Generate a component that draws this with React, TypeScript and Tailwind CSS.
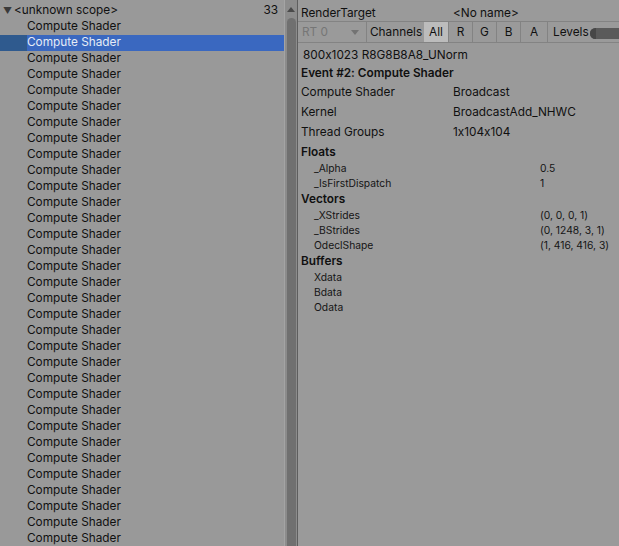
import { useState } from 'react';

const rows = Array.from({ length: 33 }, () => 'Compute Shader');

function ScopeList() {
    const [selected, setSelected] = useState(1);
    return (
        <div className="flex w-[284px] shrink-0 flex-col pt-[3px] bg-[#999999]">
            <div className="flex h-4 items-center text-[11.8px] text-[#101010]">
                <span className="ml-[3px] w-[11px] text-[9px] text-[#3a3a3a]">▼</span>
                <span>&lt;unknown scope&gt;</span>
                <span className="ml-auto mr-[6px]">33</span>
            </div>
            {rows.map((label, i) => {
                const active = i === selected;
                return (
                    <div
                        key={i}
                        onClick={() => setSelected(i)}
                        className={
                            active
                                ? 'flex h-4 items-center bg-[#3a68c0] text-[11.8px] text-[#e6ecf6]'
                                : 'flex h-4 items-center text-[11.8px] text-[#101010]'
                        }
                    >
                        <span className={active ? 'h-full w-[27px] bg-[#2f5a8e]' : 'h-full w-[27px]'} />
                        <span>{label}</span>
                    </div>
                );
            })}
        </div>
    );
}

function Scrollbar() {
    return (
        <div className="flex w-[13px] shrink-0 flex-col items-center border-l border-[#a4a4a4] bg-[#8c8c8c]">
            <span className="mt-[7px] h-0 w-0 border-x-[4px] border-b-[5px] border-x-transparent border-b-[#4a4a4a]" />
            <div className="mt-[6px] w-[9px] flex-1 rounded-t-[5px] bg-[#707070]" />
        </div>
    );
}

function Prop({ label, value }: { label: string; value: string }) {
    return (
        <div className="flex h-5 items-center text-[11.8px] text-[#101010]">
            <span className="w-[155px] pl-[3px]">{label}</span>
            <span>{value}</span>
        </div>
    );
}

function Section({ title, items, first }: { title: string; items: [string, string][]; first?: boolean }) {
    return (
        <div className={first ? 'mt-[1px] flex flex-col' : 'flex flex-col'}>
            <div className="flex h-[17px] items-center pl-[3px] text-[11.8px] font-semibold text-[#101010]">{title}</div>
            {items.map(([k, v]) => (
                <div key={k} className="flex h-[15px] items-center text-[10.3px] text-[#151515]">
                    <span className="w-[242px] pl-[16px]">{k}</span>
                    <span>{v}</span>
                </div>
            ))}
        </div>
    );
}

function Inspector() {
    const channels = ['R', 'G', 'B', 'A'];
    return (
        <div className="flex min-w-0 flex-1 flex-col border-l border-[#5e5e5e] bg-[#9a9a9a]">
            <div className="flex h-[21px] items-center pt-[6px] text-[11.8px] text-[#101010]">
                <span className="w-[155px] pl-[3px]">RenderTarget</span>
                <span>&lt;No name&gt;</span>
            </div>
            <div className="flex h-[22px] items-stretch border-y border-[#838383] text-[11.8px] text-[#101010]">
                <div className="flex w-[69px] shrink-0 items-center justify-between border-r border-[#838383] pl-[4px] pr-[7px] pt-[1px] text-[#767676]">
                    <span>RT 0</span>
                    <span className="h-0 w-0 border-x-[4px] border-t-[5px] border-x-transparent border-t-[#737373]" />
                </div>
                <span className="flex w-[57px] shrink-0 items-center pl-[3px] pt-[1px]">Channels</span>
                <span className="flex w-[24px] shrink-0 items-center justify-center bg-[#bcbcbc] pt-[1px]">All</span>
                {channels.map((c) => (
                    <span
                        key={c}
                        className={
                            c === 'A'
                                ? 'flex w-[28px] shrink-0 items-center justify-center border-l border-r border-[#838383] pt-[1px]'
                                : 'flex w-[24px] shrink-0 items-center justify-center border-l border-[#838383] pt-[1px]'
                        }
                    >
                        {c}
                    </span>
                ))}
                <span className="flex items-center pl-[5px] pt-[1px]">Levels</span>
                <span className="ml-[1px] mt-[6px] flex h-[11px] w-[30px] items-center rounded-l-full bg-[#5a5a5a]">
                    <span className="h-[11px] w-[6px] rounded-l-full bg-[#474747]" />
                </span>
            </div>
            <div className="flex h-[22px] items-center pl-[5px] pt-[3px] text-[11.8px] text-[#101010]">800x1023 R8G8B8A8_UNorm</div>
            <div className="flex h-[18px] items-center pl-[3px] text-[11.8px] font-semibold text-[#101010]">Event #2: Compute Shader</div>
            <Prop label="Compute Shader" value="Broadcast" />
            <Prop label="Kernel" value="BroadcastAdd_NHWC" />
            <Prop label="Thread Groups" value="1x104x104" />
            <Section first title="Floats" items={[['_Alpha', '0.5'], ['_IsFirstDispatch', '1']]} />
            <Section
                title="Vectors"
                items={[
                    ['_XStrides', '(0, 0, 0, 1)'],
                    ['_BStrides', '(0, 1248, 3, 1)'],
                    ['OdeclShape', '(1, 416, 416, 3)'],
                ]}
            />
            <Section title="Buffers" items={[['Xdata', ''], ['Bdata', ''], ['Odata', '']]} />
        </div>
    );
}

export default function App() {
    return (
        <div className="flex h-[546px] w-[619px] overflow-hidden bg-[#999999] font-[Inter,'Noto_Sans',sans-serif] [font-variant-ligatures:no-contextual] [font-feature-settings:'calt'_0]">
            <ScopeList />
            <Scrollbar />
            <Inspector />
        </div>
    );
}
